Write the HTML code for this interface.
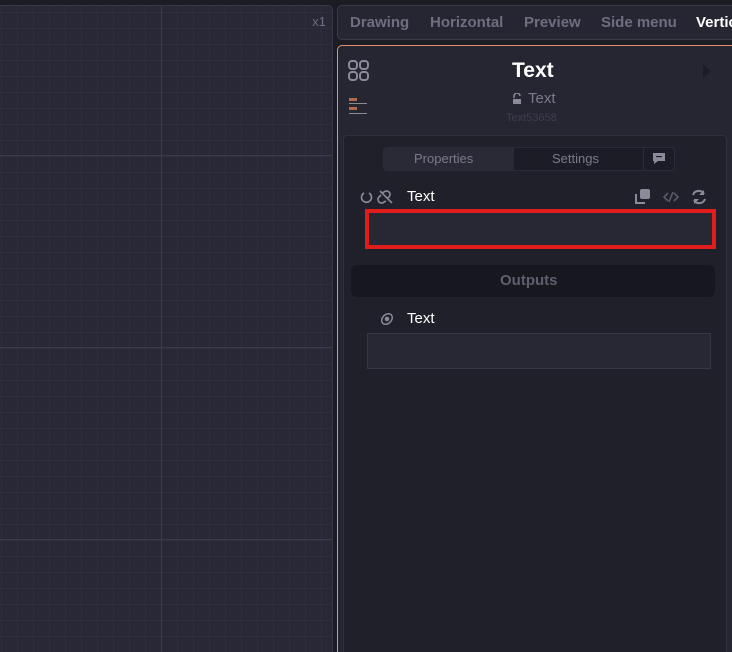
<!DOCTYPE html>
<html><head><style>
html,body{margin:0;width:732px;height:652px;overflow:hidden;}
body{background:#1c1c24;position:relative;font-family:"Liberation Sans",sans-serif;}
.canvas{position:absolute;left:0;top:5px;width:333px;height:647px;background-color:#282836;border:1px solid #363644;border-left:none;border-bottom:none;border-radius:0 5px 0 0;box-sizing:border-box;
background-image:linear-gradient(#3b3b4b,#3b3b4b),linear-gradient(#3b3b4b,#3b3b4b),linear-gradient(#3b3b4b,#3b3b4b),linear-gradient(#3b3b4b,#3b3b4b),
linear-gradient(90deg,#2e2e3c 1px,transparent 1px),linear-gradient(#2e2e3c 1px,transparent 1px);
background-size:1px 100%,100% 1px,100% 1px,100% 1px,16px 16px,16px 16px;
background-position:161px 0,0 149px,0 341px,0 533px,1px 6px,1px 6px;background-repeat:no-repeat,no-repeat,no-repeat,no-repeat,repeat,repeat;}
.x1{position:absolute;right:6px;top:8px;color:#6e6e7e;font-size:13px;}
.tabs{position:absolute;left:337px;top:5px;width:410px;height:35px;background:#262633;border:1px solid #3a3a48;border-radius:5px;box-sizing:border-box;}
.tabs span{position:absolute;top:8px;font-size:15px;font-weight:bold;color:#6e6e80;}
.panel{position:absolute;left:337px;top:45px;width:410px;height:620px;background:#262633;border:1px solid #e8906a;border-radius:5px;box-sizing:border-box;}
.inner{position:absolute;left:343px;top:135px;width:384px;height:530px;background:#20202b;border:1px solid #30303c;border-radius:4px;box-sizing:border-box;}
.t{position:absolute;color:#fff;}
</style></head><body>
<div class="canvas"><div class="x1">x1</div></div>
<div class="tabs">
<span style="left:12px">Drawing</span><span style="left:92px">Horizontal</span><span style="left:186px">Preview</span><span style="left:263px">Side menu</span><span style="left:358px;color:#fff">Vertical</span>
</div>
<div class="panel"></div>
<svg style="position:absolute;left:347px;top:59px" width="24" height="24" viewBox="0 0 24 24" fill="none" stroke="#8a8a98" stroke-width="2"><rect x="2" y="2" width="8" height="8" rx="3"/><rect x="13" y="2" width="8" height="8" rx="3"/><rect x="2" y="13" width="8" height="8" rx="3"/><rect x="13" y="13" width="8" height="8" rx="3"/></svg>
<svg style="position:absolute;left:349px;top:97px" width="20" height="18"><rect x="0" y="1" width="8" height="3" fill="#b06a4a"/><rect x="0" y="6" width="18" height="1" fill="#8a8a98"/><rect x="0" y="10" width="8" height="3" fill="#b06a4a"/><rect x="0" y="16" width="18" height="1" fill="#8a8a98"/></svg>
<svg style="position:absolute;left:702px;top:63px" width="10" height="16"><path d="M1 1 L9 8 L1 15Z" fill="#1c1c26"/></svg>
<div class="t" style="left:512px;top:59px;font-size:21px;font-weight:bold">Text</div>
<svg style="position:absolute;left:512px;top:93px" width="10" height="11"><path d="M2 5 V3 a3 3 0 0 1 6 0" stroke="#8a8a98" stroke-width="1.5" fill="none"/><rect x="1" y="6" width="8" height="5" fill="#8a8a98"/></svg>
<div class="t" style="left:528px;top:90px;font-size:15px;color:#7a7a8a">Text</div>
<div class="t" style="left:506px;top:112px;font-size:11px;color:#3e3e4e">Text53658</div>
<div class="inner"></div>
<div style="position:absolute;left:383px;top:147px;width:292px;height:24px;background:#1c1c26;border:1px solid #2c2c38;border-radius:4px;box-sizing:border-box"></div>
<div style="position:absolute;left:384px;top:148px;width:130px;height:22px;background:#2a2a37;border-radius:3px 0 0 3px"></div>
<div class="t" style="left:414px;top:151px;font-size:13px;color:#7a7a8a">Properties</div>
<div class="t" style="left:552px;top:151px;font-size:13px;color:#7a7a8a">Settings</div>
<div style="position:absolute;left:643px;top:148px;width:1px;height:22px;background:#2c2c38"></div>
<svg style="position:absolute;left:651px;top:152px" width="16" height="14"><path d="M2 1 H14 V9 H7 L3 12 V9 H2Z" fill="#8a8a98"/><rect x="5" y="4" width="6" height="1.2" fill="#1c1c26"/></svg>
<svg style="position:absolute;left:360px;top:190px" width="40" height="14" fill="none" stroke="#8a8a98" stroke-width="1.6"><path d="M4 3 A5 5 0 1 0 9 3"/><path d="M22 3 l2 -1 a3 3 0 0 1 5 5 l-2 2 M26 11 l-2 1 a3 3 0 0 1 -5 -5 l2 -2 M20 1 L32 13"/></svg>
<div class="t" style="left:407px;top:188px;font-size:15px">Text</div>
<svg style="position:absolute;left:634px;top:188px" width="76" height="18" fill="#8a8a98"><rect x="6" y="1" width="10" height="10" rx="2"/><path d="M2 6 V15 H11" stroke="#8a8a98" stroke-width="2" fill="none"/><path d="M34 5 L30 9 L34 13 M40 5 L44 9 L40 13 M39 4 L35 14" stroke="#5a5a68" stroke-width="1.6" fill="none"/><path d="M59 7 A6 6 0 0 1 70 6 M71 11 A6 6 0 0 1 60 12" stroke="#8a8a98" stroke-width="2" fill="none"/><path d="M70 2 V7 H65Z M60 16 V11 H65Z"/></svg>
<div style="position:absolute;left:365px;top:209px;width:351px;height:40px;border:4px solid #e01c1c;box-sizing:border-box;background:#282835"></div>
<div style="position:absolute;left:351px;top:265px;width:364px;height:32px;background:#171720;border-radius:6px"></div>
<div class="t" style="left:500px;top:272px;font-size:15px;font-weight:bold;color:#5e5e6e">Outputs</div>
<svg style="position:absolute;left:380px;top:312px" width="14" height="14" fill="none" stroke="#8a8a98" stroke-width="1.5"><ellipse cx="7" cy="7" rx="6" ry="4.5" transform="rotate(-45 7 7)"/><circle cx="7" cy="7" r="1.5" fill="#8a8a98"/></svg>
<div class="t" style="left:407px;top:310px;font-size:15px">Text</div>
<div style="position:absolute;left:367px;top:333px;width:344px;height:36px;background:#282835;border:1px solid #363644;box-sizing:border-box"></div>
</body></html>
